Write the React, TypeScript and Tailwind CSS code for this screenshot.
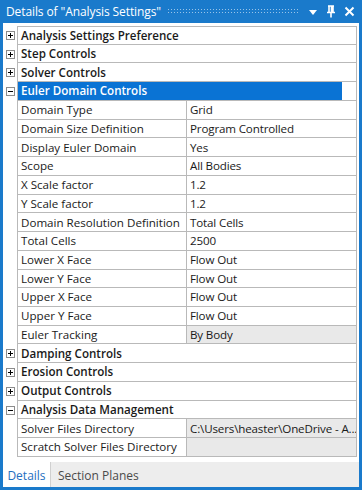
import React from "react";

type Row =
  | { kind: "cat"; label: string; open?: boolean; selected?: boolean }
  | { kind: "prop"; name: string; value: string; ro?: boolean };

const rows: Row[] = [
  { kind: "cat", label: "Analysis Settings Preference" },
  { kind: "cat", label: "Step Controls" },
  { kind: "cat", label: "Solver Controls" },
  { kind: "cat", label: "Euler Domain Controls", open: true, selected: true },
  { kind: "prop", name: "Domain Type", value: "Grid" },
  { kind: "prop", name: "Domain Size Definition", value: "Program Controlled" },
  { kind: "prop", name: "Display Euler Domain", value: "Yes" },
  { kind: "prop", name: "Scope", value: "All Bodies" },
  { kind: "prop", name: "X Scale factor", value: "1.2" },
  { kind: "prop", name: "Y Scale factor", value: "1.2" },
  { kind: "prop", name: "Domain Resolution Definition", value: "Total Cells" },
  { kind: "prop", name: "Total Cells", value: "2500" },
  { kind: "prop", name: "Lower X Face", value: "Flow Out" },
  { kind: "prop", name: "Lower Y Face", value: "Flow Out" },
  { kind: "prop", name: "Upper X Face", value: "Flow Out" },
  { kind: "prop", name: "Upper Y Face", value: "Flow Out" },
  { kind: "prop", name: "Euler Tracking", value: "By Body", ro: true },
  { kind: "cat", label: "Damping Controls" },
  { kind: "cat", label: "Erosion Controls" },
  { kind: "cat", label: "Output Controls" },
  { kind: "cat", label: "Analysis Data Management", open: true },
  { kind: "prop", name: "Solver Files Directory", value: "C:\\Users\\heaster\\OneDrive - A...", ro: true },
  { kind: "prop", name: "Scratch Solver Files Directory", value: "", ro: true },
];

function Expander({ open }: { open?: boolean }) {
  return (
    <svg width="9" height="9" viewBox="0 0 9 9" className="block">
      <rect x="0.5" y="0.5" width="8" height="8" fill="#fff" stroke="#8c8c8c" />
      <line x1="2" y1="4.5" x2="7" y2="4.5" stroke="#000" />
      {!open && <line x1="4.5" y1="2" x2="4.5" y2="7" stroke="#000" />}
    </svg>
  );
}

export default function App() {
  return (
    <div className="w-[362px] h-[490px] bg-[#1a7acb] flex flex-col overflow-hidden font-['Open_Sans',sans-serif] text-[11.6px] text-[#1a1a1a]">
      <div className="h-[23px] shrink-0 flex items-center pl-[6px] pr-[7px] text-white text-[12px]">
        <span className="whitespace-nowrap leading-none tracking-[-0.1px]">Details of "Analysis Settings"</span>
        <div className="flex-1 ml-[6px] mr-[8px] h-[7px] bg-[radial-gradient(circle,rgba(255,255,255,0.55)_0.8px,transparent_1px)] bg-[length:3px_3px]" />
        <svg width="10" height="10" viewBox="0 0 10 10" className="mr-[8px]">
          <path d="M1 3 H9 L5 8 Z" fill="#fff" />
        </svg>
        <svg width="10" height="13" viewBox="0 0 10 13" className="mr-[8px]">
          <path d="M2 1 H8 M3 1 V7 M7 1 V7 M5.5 1 V7 M1 7.5 H9 M5 7.5 V12.5" stroke="#fff" strokeWidth="1.6" fill="none" />
        </svg>
        <svg width="11" height="11" viewBox="0 0 11 11">
          <path d="M1.5 1.5 L9.5 9.5 M9.5 1.5 L1.5 9.5" stroke="#fff" strokeWidth="2" />
        </svg>
      </div>
      <div className="flex-1 mx-[3px] mb-[3px] bg-white flex flex-col">
        <div className="pt-[3px] pr-[2px]">
          {rows.map((r, i) => (
            <div key={i} className="flex h-[18.74px]">
              <div className="w-[14px] shrink-0 flex items-center pl-[3px]">
                {r.kind === "cat" && <Expander open={r.open} />}
              </div>
              <div
                className={
                  "flex-1 flex min-w-0 border-l border-r border-b border-[#b9b9b9] " +
                  (i === 0 ? "border-t" : "")
                }
              >
                {r.kind === "cat" ? (
                  <div className="flex-1 flex">
                    <div
                      className={
                        "flex items-center pl-[3px] font-semibold whitespace-nowrap " +
                        (r.selected ? "w-[324px] bg-[#0a73d4] text-white" : "flex-1")
                      }
                    >
                      {r.label}
                    </div>
                  </div>
                ) : (
                  <>
                    <div className="w-[169px] shrink-0 border-r border-[#b9b9b9] flex items-center pl-[3px] whitespace-nowrap overflow-hidden">
                      {r.name}
                    </div>
                    <div
                      className={
                        "flex-1 min-w-0 flex items-center pl-[3px] whitespace-nowrap overflow-hidden " +
                        (r.ro ? "bg-[#e9e9e9]" : "")
                      }
                    >
                      <span className="tracking-[-0.15px]">{r.value}</span>
                    </div>
                  </>
                )}
              </div>
            </div>
          ))}
        </div>
        <div className="flex-1" />
        <div className="h-[25px] shrink-0 flex bg-[#ededed] text-[12px]">
          <div className="w-[48px] bg-white flex items-center justify-center pt-[2px] text-[#1f6fbf] border-r border-[#d0d0d0]">
            Details
          </div>
          <div className="flex items-center pl-[7px] pt-[2px] text-[#4a4a4a]">Section Planes</div>
        </div>
      </div>
    </div>
  );
}
